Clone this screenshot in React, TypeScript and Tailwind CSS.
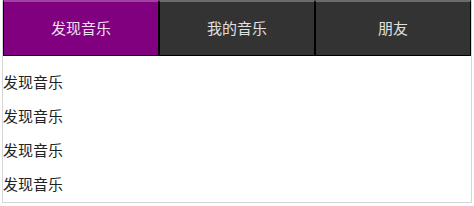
import React, { useState } from 'react';

const tabs = ['发现音乐', '我的音乐', '朋友'];

export default function App() {
  const [active, setActive] = useState(0);

  return (
    <div className="w-[470px] ml-[2px] border border-[#d6d6d6] border-t-0 bg-white font-['Microsoft_YaHei','Noto_Sans_CJK_SC',sans-serif]">
      <div className="flex h-[56px]">
        {tabs.map((label, i) => (
          <button
            key={label}
            onClick={() => setActive(i)}
            className={
              'flex-1 flex items-center justify-center text-[15px] border border-black border-t-[2px] ' +
              (i === active
                ? 'bg-[#800080] border-t-[#a040a0] text-[#f0e0f0]'
                : 'bg-[#333333] border-t-[#6a6a6a] text-[#e0e0e0]')
            }
          >
            {label}
          </button>
        ))}
      </div>
      <div className="flex flex-col pt-[9px] pb-[1px]">
        {[0, 1, 2, 3].map((n) => (
          <div key={n} className="h-[34px] flex items-center text-[15px] text-[#222]">
            发现音乐
          </div>
        ))}
      </div>
    </div>
  );
}
